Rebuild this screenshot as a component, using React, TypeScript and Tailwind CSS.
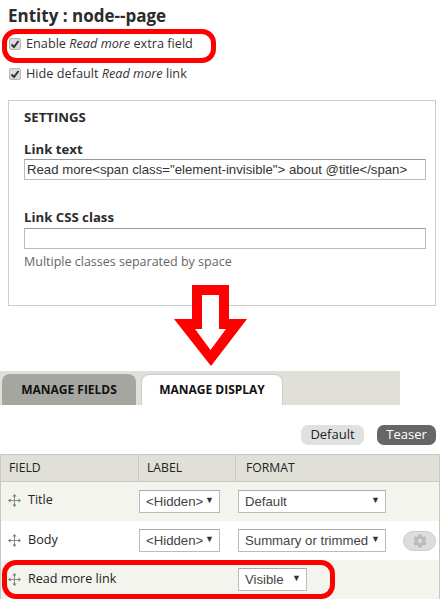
import React from "react";
import { FaCog } from "react-icons/fa";

const lucida = "font-['Open_Sans',sans-serif]";

function Check() {
  return (
    <span className="w-[12px] h-[12px] rounded-[2px] border border-[#b5b5b5] bg-[#dcdcdc] flex items-center justify-center shrink-0">
      <svg width="10" height="10" viewBox="0 0 10 10">
        <path d="M1.5 5.5 L4 8 L8.5 2" fill="none" stroke="#333" strokeWidth="2" />
      </svg>
    </span>
  );
}

function Drag() {
  return (
    <svg width="13" height="13" viewBox="0 0 13 13" className="shrink-0">
      <path d="M6.5 0 L8.5 2.5 H4.5 Z M6.5 13 L8.5 10.5 H4.5 Z M0 6.5 L2.5 4.5 V8.5 Z M13 6.5 L10.5 4.5 V8.5 Z" fill="#777" />
      <path d="M6.5 2 V11 M2 6.5 H11" stroke="#888" strokeWidth="1" />
    </svg>
  );
}

function Select({ text, w }: { text: string; w: string }) {
  return (
    <div className={`${w} h-[23px] border border-[#bbb] border-t-[#aaa] bg-white flex items-center justify-between pl-[6px] pr-[5px] font-['Liberation_Sans',sans-serif] text-[13.2px] text-[#444]`}>
      <span className="whitespace-pre">{text}</span>
      <span className="text-[#333] text-[9px] -translate-y-[1px]">▼</span>
    </div>
  );
}

function Row({ bg, name, label, format, fw, gear, nameClass }: { bg: string; name: string; label?: boolean; format: string; fw: string; gear?: boolean; nameClass: string }) {
  return (
    <div className={`${bg} flex items-center h-[39px]`}>
      <div className={`w-[138px] pl-[7px] flex items-center gap-[7px] text-[12.6px] text-[#222] ${nameClass}`}>
        <Drag />
        <span className="whitespace-nowrap">{name}</span>
      </div>
      <div className="w-[99px]">{label && <Select text="<Hidden>" w="w-[81px]" />}</div>
      <Select text={format} w={fw} />
      {gear && (
        <div className="ml-[17px] w-[33px] h-[20px] rounded-[10px] bg-[#ddd] border border-[#ccc] flex items-center justify-center">
          <FaCog className="text-[#bbb] text-[14px]" />
        </div>
      )}
    </div>
  );
}

export default function App() {
  return (
    <div className={`relative w-[440px] h-[600px] overflow-hidden bg-white ${lucida} text-[#333]`}>
      <div className="pl-[8px] pt-[5px]">
        <h2 className="text-[17px] leading-[22px] font-bold text-[#2b2b2b]">Entity : node--page</h2>
        <div className="relative mt-[8px] flex items-center gap-[5px] h-[18px] pl-[1px] text-[12.7px] whitespace-nowrap">
          <Check />
          <span>Enable <em>Read more</em> extra field</span>
          <div className="absolute left-[-6px] top-[-6px] w-[214px] h-[34px] border-[5px] border-[#f00] rounded-[14px]"></div>
        </div>
        <div className="mt-[12px] flex items-center gap-[5px] h-[18px] pl-[1px] text-[12.7px] whitespace-nowrap">
          <Check />
          <span>Hide default <em>Read more</em> link</span>
        </div>
      </div>

      <div className="mt-[17px] ml-[8px] w-[428px] h-[206px] border border-[#ccc] pl-[15px] pr-[9px] pt-[8px]">
        <div className="text-[13.2px] leading-[16px] font-bold text-[#2b2b2b]">SETTINGS</div>
        <div className="mt-[16px] text-[13.2px] leading-[16px] font-bold text-[#2b2b2b]">Link text</div>
        <div className="mt-[2px] h-[21px] border border-[#bbb] border-t-[#999] pl-[2px] flex items-center font-['Liberation_Sans',sans-serif] text-[13.2px] text-[#333] whitespace-nowrap">
          {'Read more<span class="element-invisible"> about @title</span>'}
        </div>
        <div className="mt-[29px] text-[13.2px] leading-[16px] font-bold text-[#2b2b2b]">Link CSS class</div>
        <div className="mt-[3px] h-[21px] border border-[#bbb] border-t-[#999]"></div>
        <div className="mt-[5px] text-[12.5px] leading-[16px] text-[#666]">Multiple classes separated by space</div>
      </div>

      <svg width="74" height="82" viewBox="0 0 74 82" className="absolute left-[174px] top-[285px]">
        <path d="M18 0 H55 V34 H73 L37 81 L0 34 H18 Z" fill="#f00" />
        <path d="M28 10 H45 V44 H52 L36.5 65 L21 44 H28 Z" fill="#fff" />
      </svg>

      <div className="mt-[65px] w-[400px] h-[34px] bg-[#e0e0d8] flex items-end pl-[2px] gap-[5px] text-[12px] font-bold text-[#111]">
        <div className="w-[134px] h-[31px] rounded-t-[8px] bg-[#a6a6a0] flex items-center justify-center">MANAGE FIELDS</div>
        <div className="w-[142px] h-[31px] rounded-t-[8px] bg-white border border-b-0 border-[#ccc] flex items-center justify-center">MANAGE DISPLAY</div>
      </div>

      <div className="mt-[20px] pr-[4px] flex justify-end gap-[13px] text-[13px] h-[20px]">
        <div className="w-[63px] rounded-[7px] bg-[#e0e0e0] text-[#222] flex items-center justify-center">Default</div>
        <div className="w-[59px] rounded-[7px] bg-[#666] text-white flex items-center justify-center">Teaser</div>
      </div>

      <div className="mt-[9px] border-l border-r border-t border-[#c8c8c0]">
        <div className="flex h-[27px] bg-[#e0e0d8] border-b border-[#c8c8c0] text-[12.2px] text-[#222]">
          <div className="w-[138px] pl-[8px] flex items-center border-r border-[#c8c8c0]">FIELD</div>
          <div className="w-[97px] pl-[8px] flex items-center border-r border-[#c8c8c0]">LABEL</div>
          <div className="pl-[10px] flex items-center">FORMAT</div>
        </div>
        <Row bg="bg-[#f3f4ee]" name="Title" label format="Default" fw="w-[148px]" nameClass="-translate-y-[1px]" />
        <Row bg="bg-white" name="Body" label format="Summary or trimmed" fw="w-[148px]" gear nameClass="" />
        <Row bg="bg-[#f3f4ee]" name="Read more link" format="Visible" fw="w-[69px]" nameClass="" />
      </div>

      <div className="absolute left-[2px] top-[560px] w-[333px] h-[39px] border-[5px] border-[#f00] rounded-[14px]"></div>
    </div>
  );
}
